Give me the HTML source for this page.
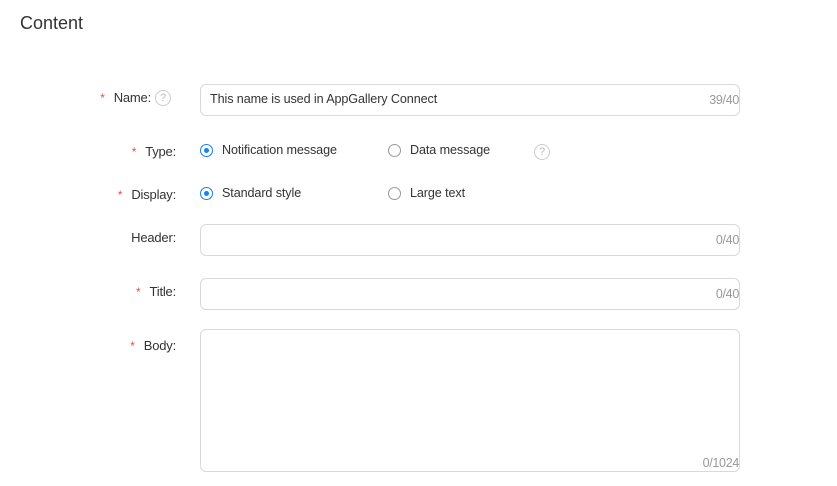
<!DOCTYPE html><html><head><style>
body{margin:0;width:837px;height:486px;background:#fff;font-family:"Liberation Sans",sans-serif;color:#333;position:relative;overflow:hidden}
.a{position:absolute}
.h{left:20px;top:13px;font-size:18px;color:#333}
.lab{font-size:13px;color:#333;right:661px;text-align:right;white-space:nowrap;letter-spacing:-0.2px}
.st{color:#e84c4c;font-size:12px;margin-right:9px;position:relative;top:0px}
.in{left:200px;width:538px;border:1px solid #d9d9d9;border-radius:6px;background:#fff}
.cnt{font-size:12.5px;color:#999;right:98px;letter-spacing:-0.3px}
.r{width:11px;height:11px;border:1px solid #999;border-radius:50%}
.r.on{border-color:#1a7ff0}
.r.on:after{content:"";position:absolute;left:3px;top:3px;width:5px;height:5px;border-radius:50%;background:#1a7ff0}
.t{font-size:12.6px;color:#333;letter-spacing:-0.1px}
.q{width:14px;height:14px;border:1px solid #ccc;border-radius:50%;color:#bbb;font-size:11px;text-align:center;line-height:14px}
</style></head><body>
<div class="a h">Content</div>
<div class="a lab" style="top:90px;right:686px"><span class="st">*</span>Name:</div>
<div class="a q" style="left:155px;top:90px">?</div>
<div class="a in" style="top:84px;height:30px"></div>
<div class="a t" style="left:210px;top:92px">This name is used in AppGallery Connect</div>
<div class="a cnt" style="top:93px">39/40</div>
<div class="a lab" style="top:144px"><span class="st">*</span>Type:</div>
<div class="a r on" style="left:200px;top:144px"></div><div class="a t" style="left:222px;top:143px">Notification message</div>
<div class="a r" style="left:388px;top:144px"></div><div class="a t" style="left:410px;top:143px">Data message</div>
<div class="a q" style="left:534px;top:144px">?</div>
<div class="a lab" style="top:187px"><span class="st">*</span>Display:</div>
<div class="a r on" style="left:200px;top:187px"></div><div class="a t" style="left:222px;top:186px">Standard style</div>
<div class="a r" style="left:388px;top:187px"></div><div class="a t" style="left:410px;top:186px">Large text</div>
<div class="a lab" style="top:230px">Header:</div>
<div class="a in" style="top:224px;height:30px"></div><div class="a cnt" style="top:233px">0/40</div>
<div class="a lab" style="top:284px"><span class="st">*</span>Title:</div>
<div class="a in" style="top:278px;height:30px"></div><div class="a cnt" style="top:287px">0/40</div>
<div class="a lab" style="top:338px"><span class="st">*</span>Body:</div>
<div class="a in" style="top:329px;height:141px"></div><div class="a cnt" style="top:456px">0/1024</div>
</body></html>
